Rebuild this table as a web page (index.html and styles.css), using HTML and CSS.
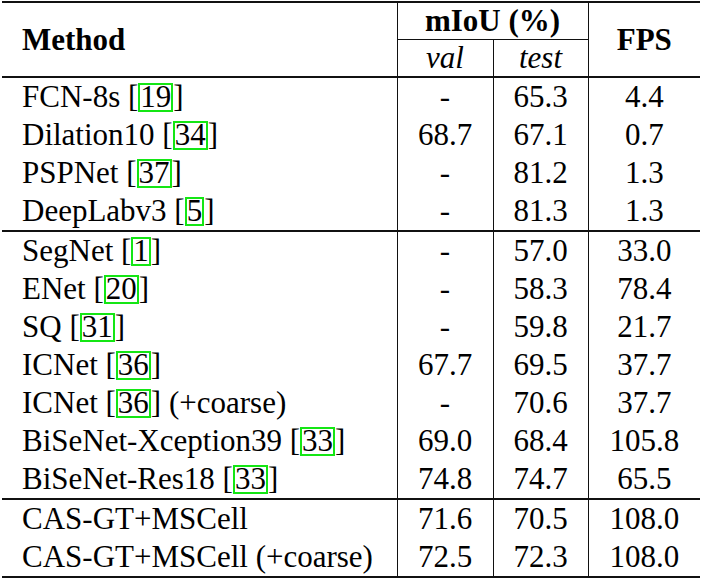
FILE: index.html
```html
<!DOCTYPE html>
<html>
<head>
<meta charset="utf-8">
<link rel="stylesheet" href="styles.css">
</head>
<body>
<div class="page">
<table class="results">
  <colgroup>
    <col class="c-method">
    <col class="c-val">
    <col class="c-test">
    <col class="c-fps">
  </colgroup>
  <thead>
    <tr class="h1">
      <th rowspan="2" class="method-h">Method</th>
      <th colspan="2" class="miou">mIoU (%)</th>
      <th rowspan="2" class="fps-h">FPS</th>
    </tr>
    <tr class="h2">
      <th class="sub">val</th>
      <th class="sub">test</th>
    </tr>
  </thead>
  <tbody>
    <tr><td class="m">FCN-8s [<span class="cite">19</span>]</td><td>-</td><td>65.3</td><td>4.4</td></tr>
    <tr><td class="m">Dilation10 [<span class="cite">34</span>]</td><td>68.7</td><td>67.1</td><td>0.7</td></tr>
    <tr><td class="m">PSPNet [<span class="cite">37</span>]</td><td>-</td><td>81.2</td><td>1.3</td></tr>
    <tr><td class="m">DeepLabv3 [<span class="cite">5</span>]</td><td>-</td><td>81.3</td><td>1.3</td></tr>
  </tbody>
  <tbody>
    <tr><td class="m">SegNet [<span class="cite">1</span>]</td><td>-</td><td>57.0</td><td>33.0</td></tr>
    <tr><td class="m">ENet [<span class="cite">20</span>]</td><td>-</td><td>58.3</td><td>78.4</td></tr>
    <tr><td class="m">SQ [<span class="cite">31</span>]</td><td>-</td><td>59.8</td><td>21.7</td></tr>
    <tr><td class="m">ICNet [<span class="cite">36</span>]</td><td>67.7</td><td>69.5</td><td>37.7</td></tr>
    <tr><td class="m">ICNet [<span class="cite">36</span>] (+coarse)</td><td>-</td><td>70.6</td><td>37.7</td></tr>
    <tr><td class="m">BiSeNet-Xception39 [<span class="cite">33</span>]</td><td>69.0</td><td>68.4</td><td>105.8</td></tr>
    <tr><td class="m">BiSeNet-Res18 [<span class="cite">33</span>]</td><td>74.8</td><td>74.7</td><td>65.5</td></tr>
  </tbody>
  <tbody>
    <tr><td class="m">CAS-GT+MSCell</td><td>71.6</td><td>70.5</td><td>108.0</td></tr>
    <tr><td class="m">CAS-GT+MSCell (+coarse)</td><td>72.5</td><td>72.3</td><td>108.0</td></tr>
  </tbody>
</table>
</div>
</body>
</html>
```
FILE: styles.css
```css
html, body {
  margin: 0;
  padding: 0;
  background: #fff;
}

.page {
  padding: 1px 3px 0 2px;
}

.results {
  width: 698px;
  border-collapse: collapse;
  table-layout: fixed;
  font-family: "Liberation Serif", "Times New Roman", serif;
  font-size: 31px;
  color: #000;
  border-top: 2px solid #111;
  border-bottom: 2px solid #111;
}

.c-method { width: 395px; }
.c-val { width: 96px; }
.c-test { width: 95px; }
.c-fps { width: 112px; }

.results th,
.results td {
  padding: 0;
  text-align: center;
  line-height: 32px;
  border-left: 1px solid #111;
}

.results th:first-child,
.results td:first-child {
  border-left: none;
}

.results tbody + tbody {
  border-top: 2px solid #111;
}

.results thead {
  border-bottom: 2px solid #111;
}

.results .h1 th { height: 36px; }
.results .h2 th { height: 36px; }

.results .method-h {
  text-align: left;
  padding-left: 20px;
  font-weight: bold;
  border-left: none;
}

.results .fps-h {
  border-left: 1px solid #111;
}

.results .miou {
  font-weight: bold;
  border-bottom: 1px solid #111;
}

.results .h2 .sub {
  font-style: italic;
  font-weight: normal;
}

.results .h2 .sub:first-child {
  border-left: 1px solid #111;
}

.results tbody td {
  height: 38px;
  vertical-align: middle;
}

.results td.m {
  text-align: left;
  padding-left: 20px;
  white-space: nowrap;
}

.cite {
  display: inline-block;
  line-height: 0.72em;
  padding: 1px 0 2px;
  border: 2px solid #14e614;
}
```
